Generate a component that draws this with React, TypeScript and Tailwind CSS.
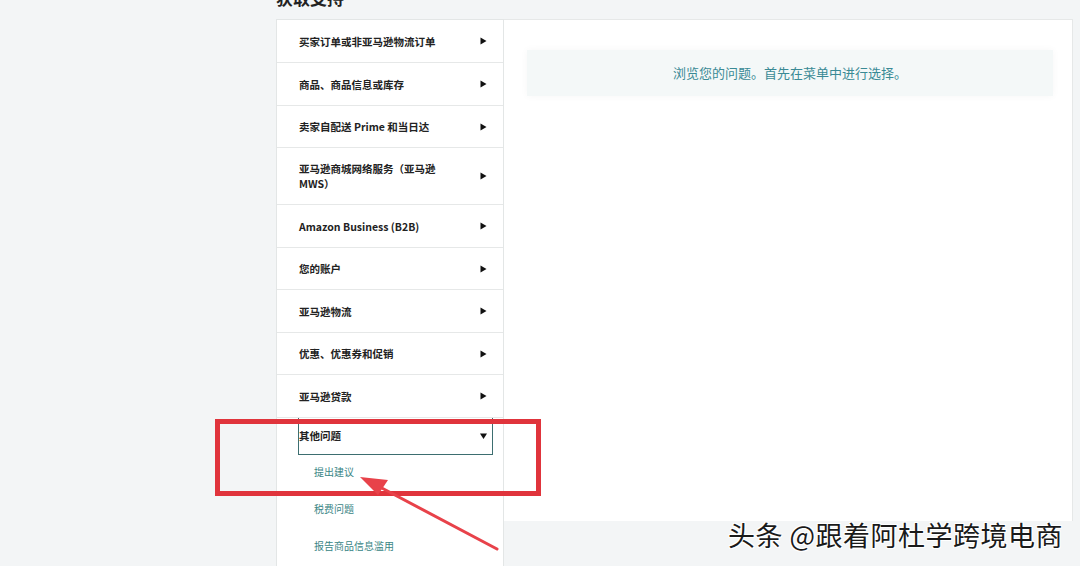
import React from 'react';

const font = { fontFamily: '"Noto Sans CJK SC", "Noto Sans", sans-serif' };

const Tri: React.FC<{ down?: boolean }> = ({ down }) => (
  <svg width="7" height="8" viewBox="0 0 7 8" className="shrink-0">
    {down ? <polygon points="0,1.5 7,1.5 3.5,7" fill="#111" /> : <polygon points="0.5,0.5 6.5,4 0.5,7.5" fill="#111" />}
  </svg>
);

const App: React.FC = () => {
  const topics = [
    { label: '买家订单或非亚马逊物流订单', h: 'h-[43px]' },
    { label: '商品、商品信息或库存', h: 'h-[43px]' },
    { label: '卖家自配送 Prime 和当日达', h: 'h-[42px]' },
    { label: '亚马逊商城网络服务（亚马逊 MWS）', h: 'h-[57px]', wrap: true },
    { label: 'Amazon Business (B2B)', h: 'h-[43px]' },
    { label: '您的账户', h: 'h-[42px]' },
    { label: '亚马逊物流', h: 'h-[43px]' },
    { label: '优惠、优惠券和促销', h: 'h-[42px]' },
    { label: '亚马逊贷款', h: 'h-[43px]' },
  ];
  const subs = ['提出建议', '税费问题', '报告商品信息滥用'];

  return (
    <div className="relative w-[1080px] h-[566px] overflow-hidden bg-[#f3f5f6]" style={font}>
      <div className="pl-[276px]">
        <div className="h-[19px] overflow-hidden">
          <h1 className="-mt-[14px] text-[17px] font-bold text-[#222] leading-[24px]">获取支持</h1>
        </div>
        <div className="flex">
          {/* left menu */}
          <div className="w-[228px] bg-white border-x border-t border-[#e3e6e6]">
            {topics.map((t) => (
              <div
                key={t.label}
                className={`${t.h} border-b border-[#e6e8e8] pl-[22px] pr-[16px] flex items-center justify-between`}
              >
                <span className={`text-[10.5px] font-bold text-[#222] leading-[15px] ${t.wrap ? 'w-[150px]' : ''}`}>
                  {t.label}
                </span>
                <Tri />
              </div>
            ))}
            <div className="pl-[21px] pr-[10px]">
              <div className="h-[37px] border-l border-r border-b border-[#3d6e70] flex items-center justify-between pr-[5px]">
                <span className="text-[10.5px] font-bold text-[#222]">其他问题</span>
                <Tri down />
              </div>
            </div>
            <div className="pl-[37px] pt-[9px] flex flex-col gap-[22px] h-[200px]">
              {subs.map((s) => (
                <span key={s} className="text-[10px] leading-[15px] text-[#3a8585]">{s}</span>
              ))}
            </div>
          </div>
          {/* right panel */}
          <div className="w-[569px] h-[502px] bg-white border-r border-t border-[#e6e8e8] pt-[30px] pl-[23px] pr-[19px]">
            <div className="h-[46px] bg-[#f4f8f8] shadow-[0_0_8px_rgba(0,0,0,0.04)] flex items-center justify-center">
              <span className="text-[13px] text-[#3a8a95]">浏览您的问题。首先在菜单中进行选择。</span>
            </div>
          </div>
        </div>
      </div>

      {/* annotation overlay */}
      <div className="absolute left-[215px] top-[419px] w-[326px] h-[77px] border-[5px] border-[#e0343c]" />
      <svg className="absolute left-0 top-0" width="1080" height="566">
        <line x1="497" y1="549" x2="378" y2="486" stroke="#e8424a" strokeWidth="3" strokeLinecap="round" />
        <polygon points="360,477 388,480 378,495" fill="#e8424a" />
      </svg>
      <div
        className="absolute left-[728px] top-[518px] text-[27px] leading-[34px] text-[#1a1a1a] tracking-[0.5px]"
        style={{ textShadow: '1px 1px 0 #fff, -1px -1px 0 #fff, 1px -1px 0 #fff, -1px 1px 0 #fff' }}
      >
        头条 @跟着阿杜学跨境电商
      </div>
    </div>
  );
};

export default App;
